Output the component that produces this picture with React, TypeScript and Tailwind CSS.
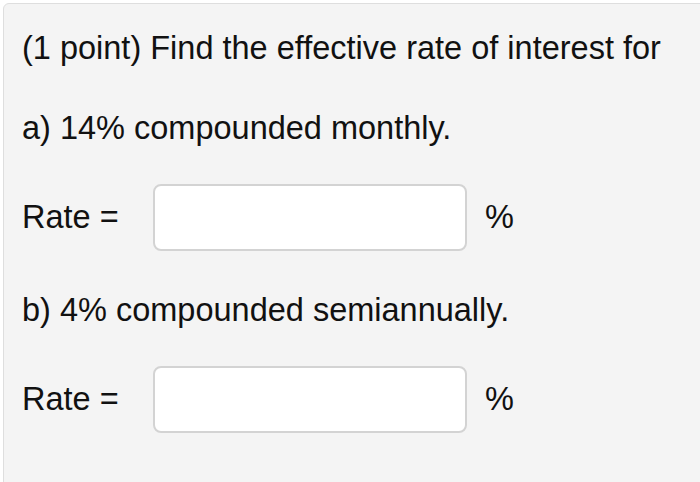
export default function App() {
  return (
    <div className="w-[700px] h-[482px] bg-white pt-[3px] pl-[3px] overflow-hidden" style={{ fontFamily: '"Liberation Sans", Arial, sans-serif' }}>
      <div className="w-[720px] h-[500px] bg-[#f4f4f4] border border-[#dedede] rounded-tl-[6px] pl-[18px] text-[32.5px] text-[#111] leading-none">
        <div className="h-[88px] flex items-center">(1 point) Find the effective rate of interest for</div>
        <div className="h-[72px] flex items-center">a) 14% compounded monthly.</div>
        <div className="flex items-center mt-[20px]">
          <span className="w-[131px]">Rate =</span>
          <div className="w-[314px] h-[67px] bg-white border-2 border-[#d3d3d3] rounded-[8px]" />
          <span className="ml-[18px]">%</span>
        </div>
        <div className="h-[60px] mt-[29px] flex items-center">b) 4% compounded semiannually.</div>
        <div className="flex items-center mt-[26px]">
          <span className="w-[131px]">Rate =</span>
          <div className="w-[314px] h-[67px] bg-white border-2 border-[#d3d3d3] rounded-[8px]" />
          <span className="ml-[18px]">%</span>
        </div>
      </div>
    </div>
  );
}
